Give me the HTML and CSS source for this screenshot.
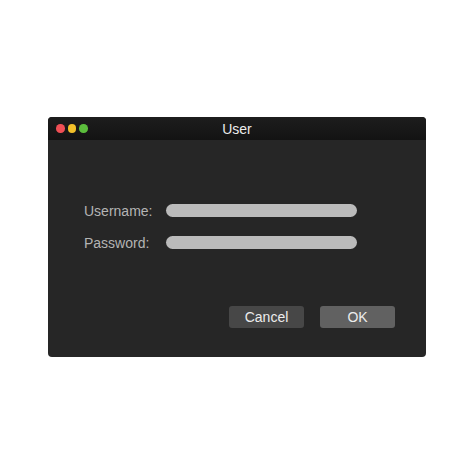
FILE: index.html
```html
<!DOCTYPE html>
<html>
<head>
<meta charset="utf-8">
<link rel="stylesheet" href="styles.css">
</head>
<body>
<div class="window">
  <div class="titlebar">
    <div class="lights">
      <span class="light red"></span>
      <span class="light yellow"></span>
      <span class="light green"></span>
    </div>
    <div class="title">User</div>
  </div>
  <div class="content">
    <div class="form">
      <div class="row">
        <span class="label">Username:</span>
        <span class="field"></span>
      </div>
      <div class="row">
        <span class="label">Password:</span>
        <span class="field"></span>
      </div>
    </div>
    <div class="buttons">
      <div class="btn cancel">Cancel</div>
      <div class="btn ok">OK</div>
    </div>
  </div>
</div>
</body>
</html>
```
FILE: styles.css
```css
html, body {
  margin: 0;
  padding: 0;
  background: #ffffff;
}
body {
  padding: 117px 0 0 48px;
  font-family: "Liberation Sans", Arial, sans-serif;
}
.window {
  width: 378px;
  height: 240px;
  background: #262626;
  border-radius: 4px;
  overflow: hidden;
  display: flex;
  flex-direction: column;
}
.titlebar {
  height: 23px;
  background: linear-gradient(#1d1d1d, #131313);
  display: flex;
  align-items: center;
  position: relative;
  flex: none;
}
.lights {
  display: flex;
  gap: 3px;
  padding-left: 8px;
}
.light {
  width: 8.5px;
  height: 8.5px;
  border-radius: 50%;
  display: block;
}
.red { background: #ef4f55; }
.yellow { background: #f2c02a; }
.green { background: #5bbd3c; }
.title {
  position: absolute;
  left: 0;
  right: 0;
  text-align: center;
  color: #ececec;
  font-size: 14px;
}
.content {
  display: flex;
  flex-direction: column;
  padding: 64px 0 0 36px;
}
.form {
  display: flex;
  flex-direction: column;
  gap: 19px;
}
.row {
  display: flex;
  align-items: center;
  height: 13px;
}
.label {
  width: 82px;
  color: #b4b4b4;
  font-size: 14px;
}
.field {
  display: block;
  width: 191px;
  height: 13px;
  border-radius: 7px;
  background: #bbbbbb;
}
.buttons {
  display: flex;
  gap: 16px;
  margin-top: 57px;
  padding-left: 145px;
}
.btn {
  width: 75px;
  height: 22px;
  border-radius: 3px;
  color: #ececec;
  font-size: 14px;
  display: flex;
  align-items: center;
  justify-content: center;
}
.cancel { background: #474747; }
.ok { background: #616161; }
```
